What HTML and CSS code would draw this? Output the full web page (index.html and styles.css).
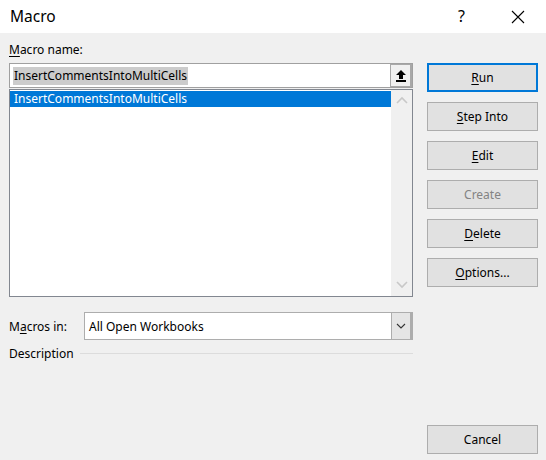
FILE: index.html
```html
<!DOCTYPE html>
<html>
<head>
<meta charset="utf-8">
<link rel="stylesheet" href="styles.css">
</head>
<body>
<div class="dialog">
  <div class="titlebar">
    <span class="title">Macro</span>
    <span class="help">?</span>
    <svg class="close" width="14" height="14" viewBox="0 0 14 14"><path d="M1 1 L13 13 M13 1 L1 13" stroke="#000" stroke-width="1.1" fill="none"/></svg>
  </div>
  <div class="content">
    <div class="left">
      <div class="label"><u>M</u>acro name:</div>
      <div class="namebox">
        <span class="nametext">InsertCommentsIntoMultiCells</span>
        <div class="upbtn">
          <svg width="12" height="14" viewBox="0 0 12 14"><path d="M6 1 L11 6 L8 6 L8 10 L4 10 L4 6 L1 6 Z" fill="#000"/><rect x="1" y="11" width="10" height="2" fill="#000"/></svg>
        </div>
      </div>
      <div class="list">
        <div class="items">
          <div class="item sel">InsertCommentsIntoMultiCells</div>
        </div>
        <div class="scroll">
          <svg width="12" height="8" viewBox="0 0 12 8"><path d="M1 7 L6 2 L11 7" stroke="#c8c8c8" stroke-width="1.6" fill="none"/></svg>
          <svg width="12" height="8" viewBox="0 0 12 8"><path d="M1 1 L6 6 L11 1" stroke="#c8c8c8" stroke-width="1.6" fill="none"/></svg>
        </div>
      </div>
      <div class="inrow">
        <span class="inlabel">M<u>a</u>cros in:</span>
        <div class="combo">
          <span class="combotext">All Open Workbooks</span>
          <div class="dropbtn">
            <svg width="10" height="6" viewBox="0 0 10 6"><path d="M1 1 L5 5 L9 1" stroke="#333" stroke-width="1.1" fill="none"/></svg>
          </div>
        </div>
      </div>
      <div class="descrow">
        <span>Description</span>
        <div class="rule"></div>
      </div>
    </div>
    <div class="right">
      <div class="btn default"><span><u>R</u>un</span></div>
      <div class="btn"><span><u>S</u>tep Into</span></div>
      <div class="btn"><span><u>E</u>dit</span></div>
      <div class="btn disabled"><span>Create</span></div>
      <div class="btn"><span><u>D</u>elete</span></div>
      <div class="btn"><span><u>O</u>ptions...</span></div>
      <div class="spacer"></div>
      <div class="btn"><span>Cancel</span></div>
    </div>
  </div>
</div>
</body>
</html>
```
FILE: styles.css
```css
html, body {
  margin: 0;
  padding: 0;
}
body {
  width: 546px;
  height: 460px;
  background: #f0f0f0;
  font-family: "Noto Sans", "Open Sans", sans-serif;
  font-size: 12px;
  color: #000;
  overflow: hidden;
}
u {
  text-decoration: underline;
  text-underline-offset: 2px;
}
.dialog {
  width: 546px;
  height: 460px;
  display: flex;
  flex-direction: column;
}
.titlebar {
  height: 33px;
  background: #fff;
  display: flex;
  align-items: center;
  padding-left: 10px;
  box-sizing: border-box;
}
.title {
  font-size: 15.5px;
  flex: 1;
  padding-bottom: 2px;
}
.help {
  font-size: 16px;
  margin-right: 46px;
  padding-bottom: 2px;
}
.close {
  margin-right: 21px;
}
.content {
  flex: 1;
  display: flex;
  padding: 9px 8px 6px 9px;
}
.left {
  width: 404px;
  display: flex;
  flex-direction: column;
}
.label {
  height: 21px;
  line-height: 16px;
}
.namebox {
  height: 25px;
  box-sizing: border-box;
  border: 1px solid #a0a0a0;
  background: #fff;
  display: flex;
  align-items: center;
  padding-left: 3px;
}
.nametext {
  background: #cccccc;
  line-height: 18px;
  padding: 0 1px;
  flex: none;
}
.upbtn {
  margin-left: auto;
  width: 22px;
  height: 23px;
  box-sizing: border-box;
  border: 1px solid #a8a8a8;
  border-right-width: 2px;
  background: #f0f0f0;
  display: flex;
  align-items: center;
  justify-content: center;
}
.list {
  margin-top: 1px;
  height: 208px;
  box-sizing: border-box;
  border: 1px solid #828790;
  background: #fff;
  display: flex;
}
.items {
  flex: 1;
  padding-top: 1px;
}
.item {
  height: 16px;
  line-height: 16px;
  padding-left: 4px;
}
.item.sel {
  background: #0078d7;
  color: #fff;
}
.scroll {
  width: 21px;
  background: #f0f0f0;
  display: flex;
  flex-direction: column;
  justify-content: space-between;
  align-items: center;
  padding: 6px 0 7px;
  box-sizing: border-box;
}
.inrow {
  margin-top: 15px;
  display: flex;
  align-items: center;
  height: 28px;
}
.inlabel {
  width: 75px;
}
.combo {
  flex: 1;
  height: 28px;
  box-sizing: border-box;
  border: 1px solid #adadad;
  background: #fff;
  display: flex;
  align-items: center;
  padding-left: 4px;
}
.combotext {
  flex: 1;
}
.dropbtn {
  width: 21px;
  height: 26px;
  box-sizing: border-box;
  background: #e5e5e5;
  border-left: 1px solid #adadad;
  border-right: 2px solid #adadad;
  display: flex;
  align-items: center;
  justify-content: center;
}
.descrow {
  display: flex;
  align-items: center;
  margin-top: 3px;
  height: 20px;
}
.rule {
  flex: 1;
  height: 1px;
  background: #dcdcdc;
  margin-left: 6px;
  margin-top: 0px;
}
.right {
  margin-left: 14px;
  margin-top: 21px;
  width: 111px;
  display: flex;
  flex-direction: column;
  gap: 10px;
}
.spacer {
  flex: 1;
}
.btn {
  height: 29px;
  flex: none;
  box-sizing: border-box;
  border: 1px solid #adadad;
  background: #e1e1e1;
  display: flex;
  align-items: center;
  justify-content: center;
}
.btn.default {
  border: 2px solid #0078d7;
}
.btn.disabled {
  color: #838383;
}
```
